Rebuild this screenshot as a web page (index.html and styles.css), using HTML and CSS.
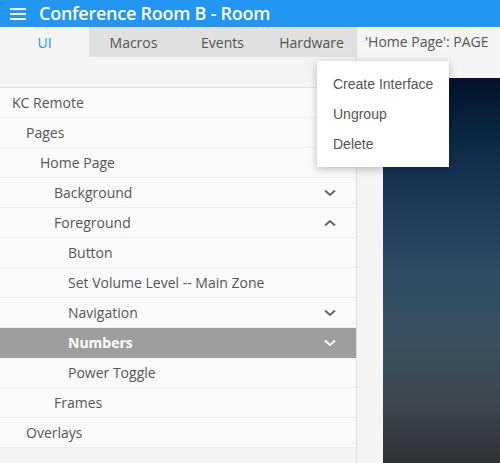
FILE: index.html
```html
<!DOCTYPE html>
<html>
<head>
<meta charset="utf-8">
<link rel="stylesheet" href="styles.css">
</head>
<body>
<div class="app">
  <header class="topbar">
    <svg class="menu-icon" width="16" height="12" viewBox="0 0 16 12"><rect x="0" y="0" width="16" height="2" fill="#fff"/><rect x="0" y="5" width="16" height="2" fill="#fff"/><rect x="0" y="10" width="16" height="2" fill="#fff"/></svg>
    <span class="title">Conference Room B - Room</span>
  </header>
  <div class="main">
    <div class="left">
      <nav class="tabs">
        <div class="tab active">UI</div>
        <div class="tab">Macros</div>
        <div class="tab">Events</div>
        <div class="tab">Hardware</div>
      </nav>
      <div class="spacer"></div>
      <ul class="tree">
        <li class="row l0">KC Remote</li>
        <li class="row l1">Pages</li>
        <li class="row l2">Home Page</li>
        <li class="row l3">Background<svg class="chev" width="12" height="8" viewBox="0 0 12 8"><path d="M1 1.5 L6 6 L11 1.5" fill="none" stroke="#666" stroke-width="2"/></svg></li>
        <li class="row l3">Foreground<svg class="chev" width="12" height="8" viewBox="0 0 12 8"><path d="M1 6.5 L6 2 L11 6.5" fill="none" stroke="#666" stroke-width="2"/></svg></li>
        <li class="row l4">Button</li>
        <li class="row l4">Set Volume Level -- Main Zone</li>
        <li class="row l4">Navigation<svg class="chev" width="12" height="8" viewBox="0 0 12 8"><path d="M1 1.5 L6 6 L11 1.5" fill="none" stroke="#666" stroke-width="2"/></svg></li>
        <li class="row l4 selected">Numbers<svg class="chev" width="12" height="8" viewBox="0 0 12 8"><path d="M1 1.5 L6 6 L11 1.5" fill="none" stroke="#fff" stroke-width="2"/></svg></li>
        <li class="row l4">Power Toggle</li>
        <li class="row l3">Frames</li>
        <li class="row l1">Overlays</li>
      </ul>
    </div>
    <div class="right">
      <div class="crumb">'Home Page': PAGE</div>
      <div class="canvas">
        <div class="page-bg"></div>
      </div>
    </div>
  </div>
  <div class="context-menu">
    <div class="menu-item">Create Interface</div>
    <div class="menu-item">Ungroup</div>
    <div class="menu-item">Delete</div>
  </div>
</div>
</body>
</html>
```
FILE: styles.css
```css
* { box-sizing: border-box; }
html, body { margin: 0; padding: 0; }
body {
  width: 500px;
  height: 463px;
  overflow: hidden;
  font-family: "Open Sans", sans-serif;
  background: #f4f4f4;
}
.app { position: relative; width: 500px; height: 463px; }
.topbar {
  height: 27px;
  background: #2196f3;
  display: flex;
  align-items: center;
  padding-left: 10px;
}
.menu-icon { display: block; }
.title {
  color: #fff;
  font-size: 18px;
  font-weight: 600;
  margin-left: 13px;
  line-height: 27px;
  letter-spacing: -0.25px;
}
.main { display: flex; height: 436px; }
.left {
  width: 357px;
  border-right: 1px solid #dcdcdc;
  background: #f4f4f4;
  display: flex;
  flex-direction: column;
}
.tabs { display: flex; height: 30px; background: #e0e0e0; }
.tab {
  flex: 1;
  display: flex;
  align-items: center;
  justify-content: center;
  font-size: 14px;
  color: #555;
}
.tab.active { background: #f4f4f4; color: #2196f3; }
.spacer { height: 31px; border-bottom: 1px solid #e4e4e4; }
.tree { list-style: none; margin: 0; padding: 0; background: #fafafa; }
.row {
  height: 30px;
  display: flex;
  align-items: center;
  justify-content: space-between;
  padding-right: 20px;
  font-size: 14px;
  color: #555;
  border-bottom: 1px solid #eeeeee;
}
.l0 { padding-left: 12px; }
.l1 { padding-left: 26px; }
.l2 { padding-left: 40px; }
.l3 { padding-left: 54px; }
.l4 { padding-left: 68px; }
.row.selected { background: #9e9e9e; color: #fff; font-weight: 700; border-bottom-color: #9e9e9e; }
.chev { display: block; }
.right { flex: 1; display: flex; flex-direction: column; }
.crumb {
  height: 30px;
  line-height: 30px;
  padding-left: 8px;
  font-size: 14px;
  color: #555;
  white-space: nowrap;
}
.canvas { flex: 1; padding: 21px 0 0 26px; }
.page-bg {
  height: 100%;
  background: linear-gradient(to bottom, #04112a 0%, #0b2643 14%, #1c3a58 32%, #2c4c65 50%, #3b505f 68%, #3e4650 84%, #2f3236 100%);
}
.context-menu {
  position: absolute;
  left: 317px;
  top: 61px;
  width: 132px;
  padding: 8px 0;
  background: #fff;
  box-shadow: 0 2px 8px rgba(0,0,0,0.25);
}
.menu-item {
  height: 30px;
  line-height: 30px;
  padding-left: 16px;
  font-family: "Liberation Sans", Arial, sans-serif;
  font-size: 14px;
  color: #555;
}
```
